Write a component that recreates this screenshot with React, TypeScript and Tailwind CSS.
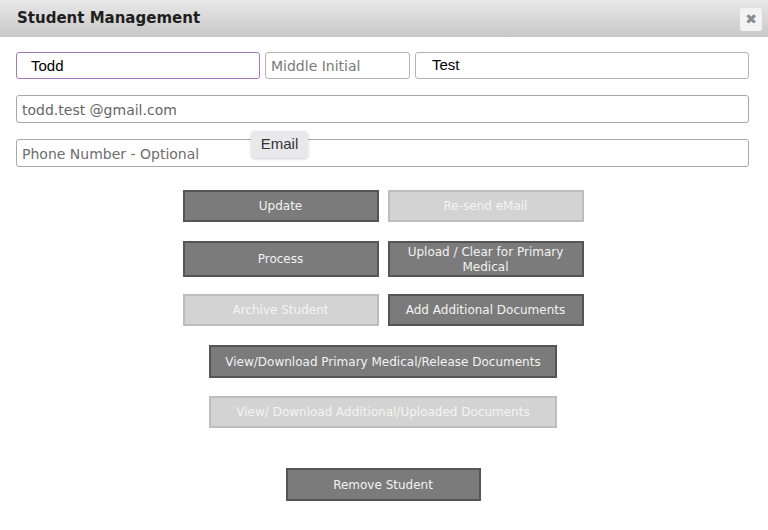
import React from "react";

const dark =
  "h-full w-full bg-[#7b7b7b] border-2 border-[#555555] text-[#f2f2f2] text-[12px] leading-[15px] [font-family:'DejaVu_Sans',Verdana,sans-serif] flex items-center justify-center text-center px-2 pt-[1px]";
const light =
  "h-full w-full bg-[#d3d3d3] border-2 border-[#bdbdbd] text-[#f4f4f4] text-[12px] leading-[15px] [font-family:'DejaVu_Sans',Verdana,sans-serif] flex items-center justify-center text-center px-2 pt-[1px]";

export default function App() {
  return (
    <div className="w-[768px] h-[530px] bg-white relative overflow-hidden">
      <div className="h-[37px] bg-gradient-to-b from-[#e8e8e8] to-[#c8c8c8] flex items-center justify-between pl-[17px] pr-[6px]">
        <div className="text-[15px] font-bold text-[#1e1e1e] [font-family:'DejaVu_Sans',Verdana,sans-serif]">
          Student Management
        </div>
        <div className="w-[22px] h-[23px] mt-[2px] bg-[#f3f3f3] rounded-[3px] flex items-center justify-center text-[#8a8a8a] text-[14px] font-bold [font-family:'DejaVu_Sans',sans-serif]">
          ✖
        </div>
      </div>

      <div className="pl-[16px] pr-[19px] pt-[15px] flex flex-col">
        <div className="flex gap-[5px] h-[27px]">
          <div className="w-[244px] h-full border-[1.5px] border-[#a878b8] rounded-[3px] flex items-center pl-[14px] pt-[2px] text-[15px] text-black [font-family:'Liberation_Sans',Arial,sans-serif]">
            Todd
          </div>
          <div className="w-[145px] h-full border border-[#b4b4b4] rounded-[3px] flex items-center pl-[5px] pt-[2px] text-[14px] text-[#7a7a7a] [font-family:'DejaVu_Sans',Verdana,sans-serif]">
            Middle Initial
          </div>
          <div className="flex-1 h-full border border-[#b4b4b4] rounded-[3px] flex items-center pl-[16px] text-[15px] text-black [font-family:'Liberation_Sans',Arial,sans-serif]">
            Test
          </div>
        </div>
        <div className="mt-[16px] h-[28px] border border-[#a8a8a8] rounded-[3px] flex items-center pl-[5px] pt-[2px] text-[14px] text-[#666666] [font-family:'DejaVu_Sans',Verdana,sans-serif]">
          todd.test @gmail.com
        </div>
        <div className="mt-[16px] h-[28px] border border-[#a8a8a8] rounded-[3px] flex items-center pl-[5px] pt-[2px] text-[14px] text-[#6e6e6e] [font-family:'DejaVu_Sans',Verdana,sans-serif]">
          Phone Number - Optional
        </div>

        <div className="mt-[23px] flex flex-col items-center">
          <div className="grid grid-cols-[196px_196px] gap-x-[9px] ml-[1px]">
            <div className="h-[32px]">
              <div className={dark}>Update</div>
            </div>
            <div className="h-[32px]">
              <div className={light}>Re-send eMail</div>
            </div>
            <div className="h-[36px] mt-[19px]">
              <div className={dark}>Process</div>
            </div>
            <div className="h-[36px] mt-[19px]">
              <div className={dark}>Upload / Clear for Primary Medical</div>
            </div>
            <div className="h-[32px] mt-[17px]">
              <div className={light}>Archive Student</div>
            </div>
            <div className="h-[32px] mt-[17px]">
              <div className={dark}>Add Additional Documents</div>
            </div>
          </div>
          <div className="w-[348px] h-[33px] mt-[19px] ml-[1px]">
            <div className={dark + " whitespace-nowrap"}>View/Download Primary Medical/Release Documents</div>
          </div>
          <div className="w-[348px] h-[32px] mt-[18px] ml-[1px]">
            <div className={light + " whitespace-nowrap"}>View/ Download Additional/Uploaded Documents</div>
          </div>
          <div className="w-[195px] h-[33px] mt-[40px] ml-[1px]">
            <div className={dark}>Remove Student</div>
          </div>
        </div>
      </div>

      <div className="absolute left-[251px] top-[131px] w-[57px] h-[27px] bg-[#e9e9eb] rounded-[4px] shadow-[0_1px_3px_rgba(0,0,0,0.2)] flex items-center justify-center text-[15px] text-[#333333] [font-family:'Liberation_Sans',Arial,sans-serif]">
        Email
      </div>
    </div>
  );
}
